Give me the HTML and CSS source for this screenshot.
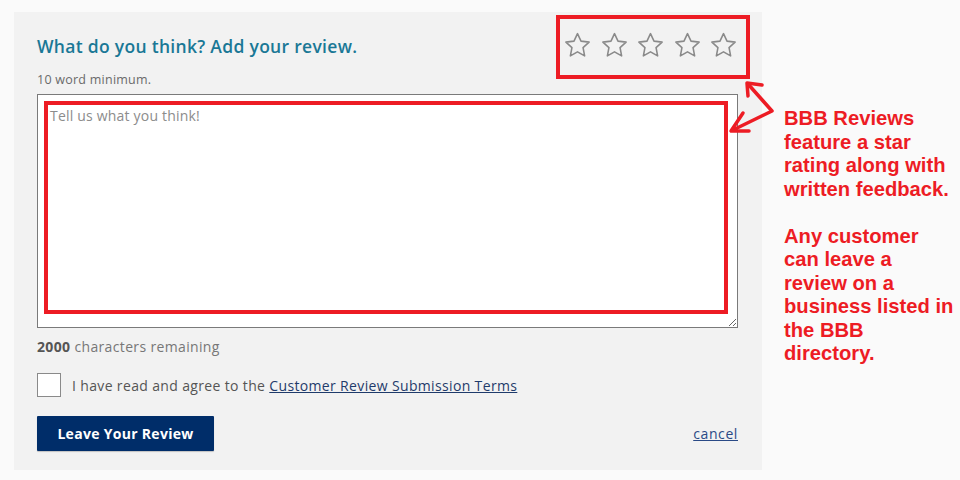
FILE: index.html
```html
<!DOCTYPE html>
<html>
<head>
<meta charset="utf-8">
<link rel="stylesheet" href="styles.css">
</head>
<body>
<div class="page">
  <div class="panel">
    <div class="head">
      <h2 class="title">What do you think? Add your review.</h2>
      <div class="stars">
        <svg class="star" viewBox="0 0 24 24"><polygon points="12,2.2 14.9,8.4 21.6,9.2 16.6,13.8 17.9,20.6 12,17.3 6.1,20.6 7.4,13.8 2.4,9.2 9.1,8.4"/></svg>
        <svg class="star" viewBox="0 0 24 24"><polygon points="12,2.2 14.9,8.4 21.6,9.2 16.6,13.8 17.9,20.6 12,17.3 6.1,20.6 7.4,13.8 2.4,9.2 9.1,8.4"/></svg>
        <svg class="star" viewBox="0 0 24 24"><polygon points="12,2.2 14.9,8.4 21.6,9.2 16.6,13.8 17.9,20.6 12,17.3 6.1,20.6 7.4,13.8 2.4,9.2 9.1,8.4"/></svg>
        <svg class="star" viewBox="0 0 24 24"><polygon points="12,2.2 14.9,8.4 21.6,9.2 16.6,13.8 17.9,20.6 12,17.3 6.1,20.6 7.4,13.8 2.4,9.2 9.1,8.4"/></svg>
        <svg class="star" viewBox="0 0 24 24"><polygon points="12,2.2 14.9,8.4 21.6,9.2 16.6,13.8 17.9,20.6 12,17.3 6.1,20.6 7.4,13.8 2.4,9.2 9.1,8.4"/></svg>
        <div class="mark mark-stars"></div>
      </div>
    </div>
    <div class="hint">10 word minimum.</div>
    <div class="field">
      <textarea class="review" placeholder="Tell us what you think!"></textarea>
      <div class="mark mark-text"></div>
    </div>
    <div class="remaining"><b>2000</b> characters remaining</div>
    <label class="agree">
      <span class="box"></span>
      <span>I have read and agree to the <a href="#" class="terms">Customer Review Submission Terms</a></span>
    </label>
    <div class="actions">
      <button class="submit">Leave Your Review</button>
      <a href="#" class="cancel">cancel</a>
    </div>
  </div>
  <div class="note">BBB Reviews<br>feature a star<br>rating along with<br>written feedback.<br><br>Any customer<br>can leave a<br>review on a<br>business listed in<br>the BBB<br>directory.</div>
  <svg class="arrow" viewBox="0 0 60 70" width="60" height="70">
    <polyline points="22,6 46,33 7,52" />
    <polyline points="36,7 21,5 22,18" />
    <polyline points="17,35 5,53 23,53" />
  </svg>
</div>
</body>
</html>
```
FILE: styles.css
```css
html, body {
  margin: 0;
  padding: 0;
  background: #fafafa;
}
.page {
  position: relative;
  display: flex;
  align-items: flex-start;
  gap: 22px;
  padding: 12px 0 0 14px;
  width: 960px;
  height: 480px;
  box-sizing: border-box;
  font-family: "Open Sans", Roboto, sans-serif;
}
.panel {
  width: 748px;
  box-sizing: border-box;
  background: #f2f2f2;
  padding: 18px 24px 19px 23px;
  display: flex;
  flex-direction: column;
}
.head {
  display: flex;
  justify-content: space-between;
  align-items: center;
  height: 32px;
}
.title {
  margin: 0;
  font-size: 17.5px;
  font-weight: 600;
  letter-spacing: 0.3px;
  color: #1a7896;
}
.stars {
  position: relative;
  display: flex;
  gap: 7.5px;
  margin-top: -2px;
}
.star {
  width: 29px;
  height: 29px;
}
.star polygon {
  fill: none;
  stroke: #8a8a8a;
  stroke-width: 1.3;
  stroke-linejoin: round;
}
.mark {
  position: absolute;
  border: 4px solid #ed1c24;
  box-sizing: border-box;
  pointer-events: none;
}
.mark-stars {
  left: -7px;
  top: -16px;
  width: 194px;
  height: 64px;
}
.hint {
  margin-top: 10px;
  font-size: 12.5px;
  line-height: 16px;
  letter-spacing: 0.25px;
  color: #6a6a6a;
}
.field {
  position: relative;
  margin-top: 6px;
  height: 234px;
}
.review {
  display: block;
  width: 701px;
  height: 234px;
  box-sizing: border-box;
  border: 1px solid #7a7a7a;
  background: #fff;
  margin: 0;
  padding: 11px 12px;
  font-family: "Open Sans", Roboto, sans-serif;
  font-size: 14px;
  letter-spacing: 0.2px;
  resize: both;
}
.review::placeholder {
  color: #8c8c8c;
}
.mark-text {
  left: 7px;
  top: 7px;
  width: 684px;
  height: 213px;
}
.remaining {
  margin-top: 9px;
  font-size: 14px;
  line-height: 20px;
  letter-spacing: 0.35px;
  color: #777;
}
.remaining b {
  color: #555;
}
.agree {
  margin-top: 16px;
  display: flex;
  align-items: center;
  gap: 11px;
  font-size: 14px;
  letter-spacing: 0.35px;
  color: #555;
}
.box {
  width: 24px;
  height: 24px;
  box-sizing: border-box;
  border: 1px solid #8a8a8a;
  background: #fff;
}
.terms {
  color: #1f3b6b;
  text-decoration: underline;
}
.actions {
  margin-top: 19px;
  display: flex;
  justify-content: space-between;
  align-items: center;
}
.submit {
  width: 177px;
  height: 35px;
  border: none;
  border-radius: 1px;
  background: #002d69;
  color: #fff;
  font-family: "Open Sans", Roboto, sans-serif;
  font-weight: 700;
  font-size: 14px;
  letter-spacing: 0.3px;
  padding: 0;
  box-shadow: 0 1px 1px rgba(0,0,0,0.2);
}
.cancel {
  color: #2a4a86;
  font-size: 14px;
  letter-spacing: 0.6px;
  text-decoration: underline;
}
.note {
  margin-top: 95px;
  font-family: "Liberation Sans", Arial, sans-serif;
  font-weight: 700;
  font-size: 20.2px;
  line-height: 23.5px;
  color: #ed1c24;
  white-space: nowrap;
}
.arrow {
  position: absolute;
  left: 726px;
  top: 78px;
  overflow: visible;
}
.arrow polyline {
  fill: none;
  stroke: #ed1c24;
  stroke-width: 3.5;
  stroke-linecap: round;
  stroke-linejoin: round;
}
```
